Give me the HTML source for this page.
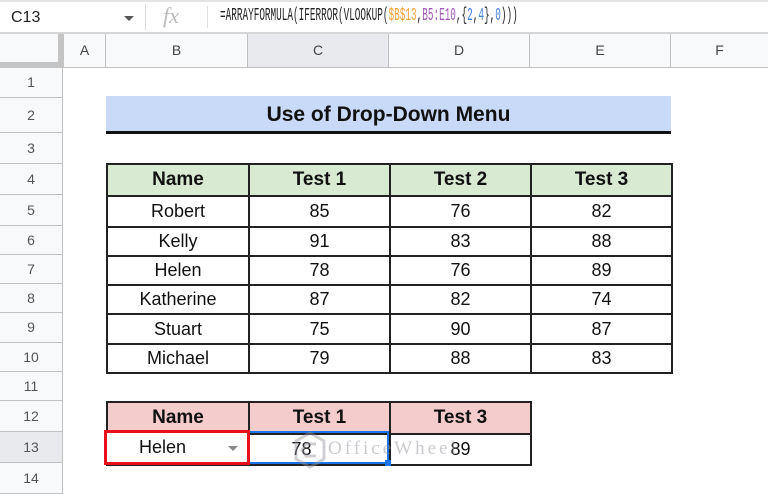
<!DOCTYPE html>
<html><head><style>
*{margin:0;padding:0;box-sizing:border-box}
body{width:768px;height:494px;overflow:hidden;background:#fff;font-family:"Liberation Sans",Arial,sans-serif;position:relative}
.a{position:absolute}
.fb{left:0;top:0;width:768px;height:34px;border-top:2px solid #e3e3e3;border-bottom:2px solid #d6d6d6;background:#fff}
.ch{top:34px;height:34px;background:#f8f9fa;border-bottom:1px solid #c0c0c0;border-right:1px solid #c0c0c0;color:#444;font-size:14px;text-align:center;line-height:33px}
.rh{left:0;width:63px;background:#f8f9fa;border-bottom:1px solid #c0c0c0;border-right:1px solid #c0c0c0;color:#555;font-size:14px;text-align:center}
td{border:2px solid #222}
</style></head><body>
<div class="a fb"></div>
<div class="a" style="left:11px;top:9px;font-size:16px;color:#222">C13</div>
<div class="a" style="left:124px;top:16px;width:0;height:0;border-left:5px solid transparent;border-right:5px solid transparent;border-top:5px solid #555"></div>
<div class="a" style="left:145px;top:4px;width:1px;height:26px;background:#ddd"></div>
<div class="a" style="left:163px;top:3px;font-family:'Liberation Serif',serif;font-style:italic;font-size:22px;color:#bbb">fx</div>
<div class="a" style="left:207px;top:6px;width:1px;height:22px;background:#ddd"></div>
<div class="a" style="left:220px;top:6px;font-family:'Liberation Mono',monospace;font-size:18px;color:#222;white-space:nowrap;transform:scaleX(0.52);transform-origin:0 0">=ARRAYFORMULA(IFERROR(VLOOKUP(<span style="color:#f2a33a">$B$13</span>,<span style="color:#a05ab5">B5:E10</span>,{<span style="color:#3f7fd8">2</span>,<span style="color:#3f7fd8">4</span>},<span style="color:#3f7fd8">0</span>)))</div>
<div class="a" style="left:0;top:34px;width:64px;height:34px;background:#f8f9fa;border-right:6px solid #c4c4c4;border-bottom:6px solid #c4c4c4"></div>
<div class="a ch" style="left:64px;width:42px">A</div>
<div class="a ch" style="left:106px;width:142px">B</div>
<div class="a ch" style="left:248px;width:141px;background:#e8eaed">C</div>
<div class="a ch" style="left:389px;width:141px">D</div>
<div class="a ch" style="left:530px;width:141px">E</div>
<div class="a ch" style="left:671px;width:97px;border-right:none">F</div>
<div class="a rh" style="top:68px;height:30px;line-height:29px">1</div>
<div class="a rh" style="top:98px;height:35px;line-height:34px">2</div>
<div class="a rh" style="top:133px;height:31px;line-height:30px">3</div>
<div class="a rh" style="top:164px;height:31px;line-height:30px">4</div>
<div class="a rh" style="top:195px;height:31px;line-height:30px">5</div>
<div class="a rh" style="top:226px;height:29px;line-height:28px">6</div>
<div class="a rh" style="top:255px;height:29px;line-height:28px">7</div>
<div class="a rh" style="top:284px;height:29px;line-height:28px">8</div>
<div class="a rh" style="top:313px;height:30px;line-height:29px">9</div>
<div class="a rh" style="top:343px;height:29px;line-height:28px">10</div>
<div class="a rh" style="top:372px;height:29px;line-height:28px">11</div>
<div class="a rh" style="top:401px;height:31px;line-height:30px">12</div>
<div class="a rh" style="top:432px;height:31px;line-height:30px;background:#e8eaed">13</div>
<div class="a rh" style="top:463px;height:31px;line-height:30px">14</div>
<div class="a" style="left:106px;top:96px;width:565px;height:38px;background:#c9daf8;border-bottom:3px solid #111;text-align:center;font-weight:bold;font-size:21px;line-height:38px;color:#111">Use of Drop-Down Menu</div>
<div class="a" style="left:106px;top:163px">
<table style="border-collapse:collapse;font-size:18px;color:#111;text-align:center">
<tr style="background:#d9ead3;font-weight:bold;font-size:19px;height:32px"><td style="width:142px">Name</td><td style="width:141px">Test 1</td><td style="width:141px">Test 2</td><td style="width:141px">Test 3</td></tr>
<tr style="height:31px"><td>Robert</td><td>85</td><td>76</td><td>82</td></tr>
<tr style="height:29px"><td>Kelly</td><td>91</td><td>83</td><td>88</td></tr>
<tr style="height:29px"><td>Helen</td><td>78</td><td>76</td><td>89</td></tr>
<tr style="height:29px"><td>Katherine</td><td>87</td><td>82</td><td>74</td></tr>
<tr style="height:30px"><td>Stuart</td><td>75</td><td>90</td><td>87</td></tr>
<tr style="height:29px"><td>Michael</td><td>79</td><td>88</td><td>83</td></tr>
</table></div>
<div class="a" style="left:106px;top:401px">
<table style="border-collapse:collapse;font-size:18px;color:#111;text-align:center">
<tr style="background:#f4cccc;font-weight:bold;font-size:19px;height:32px"><td style="width:142px">Name</td><td style="width:141px">Test 1</td><td style="width:141px">Test 3</td></tr>
<tr style="height:31px"><td></td><td style="padding-right:36px">78</td><td>89</td></tr>
</table></div>
<div class="a" style="left:248px;top:431px;width:141px;height:33px;border:2px solid #1a73e8"></div>
<div class="a" style="left:385px;top:460px;width:6px;height:6px;background:#1a73e8"></div>
<div class="a" style="left:104px;top:430px;width:146px;height:35px;border:3px solid #e8101a;background:#fff"></div>
<div class="a" style="left:107px;top:433px;width:140px;height:29px;font-size:18px;color:#111;line-height:29px;padding-left:32px">Helen</div>
<div class="a" style="left:228px;top:446px;width:0;height:0;border-left:5px solid transparent;border-right:5px solid transparent;border-top:5px solid #888"></div>
<svg class="a" style="left:292px;top:430px" width="36" height="40" viewBox="0 0 36 40"><path d="M18 3 L32 11 L32 29 L18 37 L4 29 L4 11 Z" fill="none" stroke="rgba(150,150,160,0.45)" stroke-width="3"/><path d="M24 14 L14 14 L10 20 L14 26 L24 26" fill="none" stroke="rgba(150,150,160,0.45)" stroke-width="3"/></svg>
<div class="a" style="left:328px;top:438px;font-family:'Liberation Serif',serif;font-size:19px;letter-spacing:3px;color:rgba(150,150,160,0.5)">OfficeWheel</div>
</body></html>
